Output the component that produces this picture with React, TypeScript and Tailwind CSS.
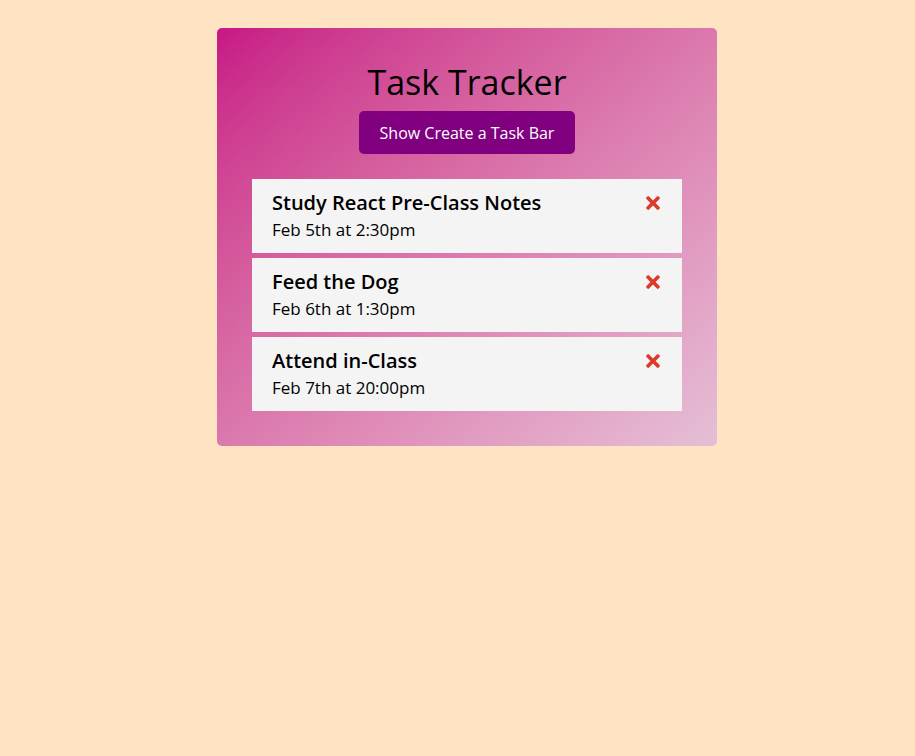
import React, { useState } from 'react';
import { FaTimes } from 'react-icons/fa';

const initialTasks = [
  { id: 1, text: 'Study React Pre-Class Notes', day: 'Feb 5th at 2:30pm' },
  { id: 2, text: 'Feed the Dog', day: 'Feb 6th at 1:30pm' },
  { id: 3, text: 'Attend in-Class', day: 'Feb 7th at 20:00pm' },
];

function App() {
  const [tasks, setTasks] = useState(initialTasks);

  const deleteTask = (id: number) => {
    setTasks(tasks.filter((t) => t.id !== id));
  };

  return (
    <div className="min-h-screen bg-[#ffe4c4] pt-[28px] font-['Open_Sans',sans-serif]">
      <div className="ml-[217px] w-[500px] rounded-[5px] bg-gradient-to-br from-[#c71585] to-[#e5bfd6] px-[35px] pt-[34px] pb-[35px]">
        <header className="flex flex-col items-center">
          <h1 className="text-[34px] leading-[40px] text-black">Task Tracker</h1>
          <button className="mt-[9px] h-[43px] w-[216px] rounded-[5px] bg-[#800080] text-[16px] text-white">
            Show Create a Task Bar
          </button>
        </header>

        <div className="mt-[25px] flex flex-col gap-[5px]">
          {tasks.map((task) => (
            <div key={task.id} className="h-[74px] bg-[#f4f4f4] pl-[20px] pr-[19px] pt-[10px]">
              <div className="flex items-center justify-between">
                <h3 className="text-[20px] leading-[28px] font-semibold text-black">{task.text}</h3>
                <FaTimes className="cursor-pointer text-[#dc3a2a]" size={20} onClick={() => deleteTask(task.id)} />
              </div>
              <p className="mt-[1px] text-[17px] leading-[24px] text-black">{task.day}</p>
            </div>
          ))}
        </div>
      </div>
    </div>
  );
}

export default App;
